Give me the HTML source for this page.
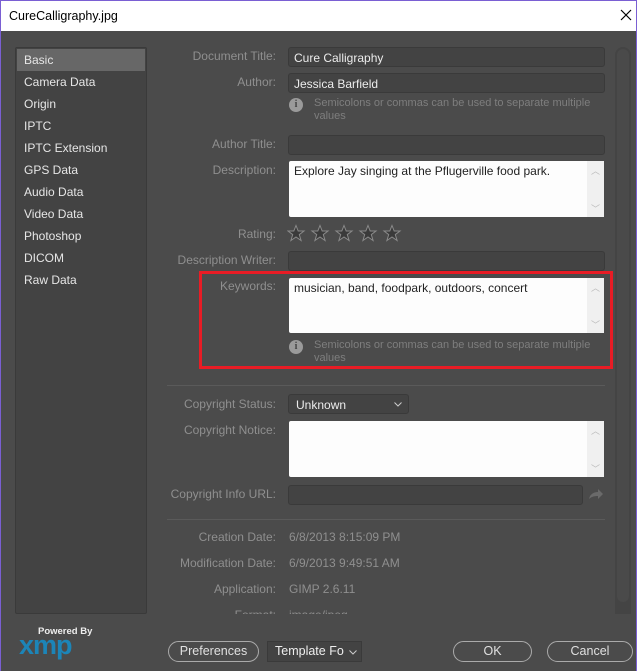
<!DOCTYPE html>
<html><head><style>
*{box-sizing:border-box;margin:0;padding:0}
body{width:637px;height:671px;overflow:hidden;background:#4b4b4b;font-family:"Liberation Sans",sans-serif;font-size:12px;position:relative}
.abs{position:absolute}
#frame{position:absolute;left:0;top:0;width:637px;height:671px;border:1px solid #7a5fd3;border-bottom:none;pointer-events:none}
#title{left:0;top:0;width:637px;height:31px;background:#fff;color:#000;font-size:12.5px;padding:9px 0 0 9px}
.side{left:15px;top:47px;width:132px;height:567px;background:#434343;border:1px solid #3a3a3a;border-radius:2px}
.side div{height:22px;line-height:22px;padding-left:8px;color:#e6e6e6;font-size:12px}
.side .sel{background:#676767;margin:1px 1px 0;padding-left:7px}
.lbl{color:#8f8f8f;text-align:right;width:180px;left:96px;font-size:12px}
.inp{background:#434343;border:1px solid #3a3a3a;border-radius:3px;color:#ececec;padding:3px 0 0 5px;font-size:12px}
.ta{background:#fdfdfd;border-radius:2px;color:#222;padding:3px 0 0 5px;font-size:12px}
.ta:after{content:"";position:absolute;right:0;top:0;width:17px;height:100%;background:#f0f0f0}
.ta b{position:absolute;right:4px;font-weight:normal;color:#bbb;font-size:9px;z-index:1}
.info{left:288px;color:#7e7e7e;font-size:11px;line-height:13px;padding-left:26px;width:320px}
.info i{position:absolute;left:1px;top:1px;width:14px;height:14px;border-radius:50%;background:#9a9a9a;color:#444;font-style:normal;font-weight:bold;font-size:10px;text-align:center;line-height:14px;font-family:"Liberation Serif",serif}
.val{left:289px;color:#8f8f8f;font-size:12px}
.sep{left:167px;width:438px;height:1px;background:#5a5a5a}
.btn{border:1px solid #aaa;border-radius:11px;color:#e0e0e0;text-align:center;height:21px;line-height:19px;font-size:12.5px}
</style></head><body>
<div id="title" class="abs">CureCalligraphy.jpg</div>
<svg class="abs" style="left:620px;top:9px" width="12" height="12"><path d="M1 1L11 11M11 1L1 11" stroke="#000" stroke-width="1.2"/></svg>
<div class="abs side">
<div class="sel">Basic</div><div>Camera Data</div><div>Origin</div><div>IPTC</div><div>IPTC Extension</div><div>GPS Data</div><div>Audio Data</div><div>Video Data</div><div>Photoshop</div><div>DICOM</div><div>Raw Data</div>
</div>
<div class="abs" style="left:615px;top:47px;width:16px;height:567px;background:#444;border-radius:8px 8px 0 0"></div>
<div class="abs" style="left:617px;top:49px;width:12px;height:553px;background:#4a4a4a;border-radius:6px"></div>

<div class="abs lbl" style="top:49px">Document Title:</div>
<div class="abs inp" style="left:288px;top:47px;width:317px;height:20px">Cure Calligraphy</div>
<div class="abs lbl" style="top:75px">Author:</div>
<div class="abs inp" style="left:288px;top:73px;width:317px;height:20px">Jessica Barfield</div>
<div class="abs info" style="top:97px"><i>i</i>Semicolons or commas can be used to separate multiple values</div>
<div class="abs lbl" style="top:137px">Author Title:</div>
<div class="abs inp" style="left:288px;top:135px;width:317px;height:20px"></div>
<div class="abs lbl" style="top:163px">Description:</div>
<div class="abs ta" style="left:289px;top:161px;width:315px;height:56px">Explore Jay singing at the Pflugerville food park.<b style="top:3px">︿</b><b style="bottom:2px">﹀</b></div>
<div class="abs lbl" style="top:227px">Rating:</div>
<svg class="abs" style="left:287px;top:224px" width="120" height="20">
<g fill="#3a3a3a" stroke="#8a8a8a" stroke-width="1">
<path id="s" d="M9 1.5L11.2 7H17L12.3 10.6L14.1 16.5L9 13L3.9 16.5L5.7 10.6L1 7H6.8Z"/>
<use href="#s" x="24"/><use href="#s" x="48"/><use href="#s" x="72"/><use href="#s" x="96"/>
</g></svg>
<div class="abs lbl" style="top:253px">Description Writer:</div>
<div class="abs inp" style="left:288px;top:251px;width:317px;height:20px"></div>
<div class="abs lbl" style="top:279px">Keywords:</div>
<div class="abs ta" style="left:289px;top:278px;width:315px;height:55px">musician, band, foodpark, outdoors, concert<b style="top:3px">︿</b><b style="bottom:2px">﹀</b></div>
<div class="abs info" style="top:339px"><i>i</i>Semicolons or commas can be used to separate multiple values</div>
<div class="abs" style="left:199px;top:271px;width:414px;height:98px;border:3px solid #e81c25"></div>
<div class="abs sep" style="top:385px"></div>
<div class="abs lbl" style="top:397px">Copyright Status:</div>
<div class="abs inp" style="left:288px;top:394px;width:121px;height:20px;padding-left:7px">Unknown<svg style="position:absolute;right:6px;top:7px" width="8" height="5"><path d="M0.5 0.5L4 4L7.5 0.5" stroke="#ccc" fill="none"/></svg></div>
<div class="abs lbl" style="top:423px">Copyright Notice:</div>
<div class="abs ta" style="left:289px;top:421px;width:315px;height:56px"><b style="top:3px">︿</b><b style="bottom:2px">﹀</b></div>
<div class="abs lbl" style="top:487px">Copyright Info URL:</div>
<div class="abs inp" style="left:288px;top:485px;width:295px;height:20px"></div>
<svg class="abs" style="left:588px;top:487px" width="16" height="14"><path d="M1 12C2 7 6 5 10 5V2L15 7L10 12V9C6 9 3 10 1 12Z" fill="#6a6a6a"/></svg>
<div class="abs sep" style="top:519px"></div>
<div class="abs lbl" style="top:530px">Creation Date:</div><div class="abs val" style="top:530px">6/8/2013 8:15:09 PM</div>
<div class="abs lbl" style="top:556px">Modification Date:</div><div class="abs val" style="top:556px">6/9/2013 9:49:51 AM</div>
<div class="abs lbl" style="top:582px">Application:</div><div class="abs val" style="top:582px">GIMP 2.6.11</div>
<div class="abs" style="left:0;top:606px;width:610px;height:8px;overflow:hidden"><div class="abs lbl" style="top:2px">Format:</div><div class="abs val" style="top:2px">image/jpeg</div></div>

<div class="abs" style="left:38px;top:626px;color:#eee;font-size:9.5px;font-weight:bold">Powered By</div>
<div class="abs" style="left:19px;top:630px;color:#1c85b8;font-size:27px;font-weight:bold;letter-spacing:-1px">xmp</div>
<div class="abs btn" style="left:168px;top:641px;width:91px">Preferences</div>
<div class="abs" style="left:267px;top:641px;width:95px;height:21px;border:1px solid #3a3a3a;background:#434343;color:#eee;font-size:12.5px;line-height:19px;padding-left:7px">Template Fo<svg style="position:absolute;right:4px;top:8px" width="8" height="5"><path d="M0.5 0.5L4 4L7.5 0.5" stroke="#ccc" fill="none"/></svg></div>
<div class="abs btn" style="left:453px;top:641px;width:79px">OK</div>
<div class="abs btn" style="left:547px;top:641px;width:86px">Cancel</div>
<div id="frame"></div>
</body></html>
